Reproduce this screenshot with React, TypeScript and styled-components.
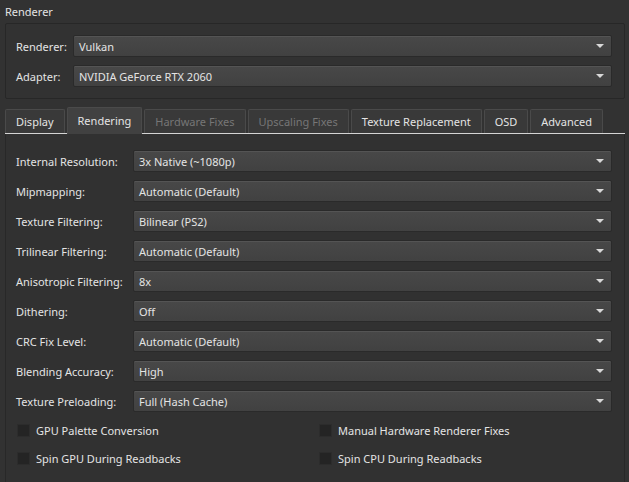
import React from 'react';
import styled, { createGlobalStyle } from 'styled-components';

const GlobalStyle = createGlobalStyle`
  html, body {
    margin: 0;
    padding: 0;
    background: #323232;
  }
  body {
    font-family: 'Noto Sans', 'Open Sans', sans-serif;
    font-size: 11px;
    color: #e4e4e4;
  }
`;

const Page = styled.div`
  width: 629px;
  height: 482px;
  overflow: hidden;
  background: #323232;
`;

const GroupTitle = styled.div`
  height: 23px;
  line-height: 24px;
  padding-left: 5px;
`;

const GroupBox = styled.div`
  margin: 0 4px 0 5px;
  border: 1px solid #272727;
  border-radius: 2px;
  padding: 11px 12px 11px 10px;
  display: grid;
  grid-template-columns: 57px 1fr;
  row-gap: 8px;
  align-items: center;
`;

const Label = styled.div`
  white-space: nowrap;
`;

const ComboBox = styled.div`
  height: 22px;
  box-sizing: border-box;
  border: 1px solid #2a2a2a;
  border-radius: 2px;
  background: linear-gradient(#484848, #414141);
  box-shadow: inset 0 1px 0 #545454;
  display: flex;
  align-items: center;
  padding: 0 7px 0 5px;
`;

const ComboText = styled.span`
  flex: 1;
  white-space: nowrap;
`;

const Arrow = styled.span`
  width: 0;
  height: 0;
  border-left: 4px solid transparent;
  border-right: 4px solid transparent;
  border-top: 4px solid #d8d8d8;
`;

const Tabs = styled.div`
  margin: 8px 4px 0 5px;
`;

const TabBar = styled.div`
  display: flex;
  align-items: flex-end;
  gap: 2px;
  height: 26px;
  border-bottom: 1px solid #d4d4d4;
`;

const Tab = styled.div<{ $active?: boolean; $disabled?: boolean }>`
  height: 24px;
  box-sizing: border-box;
  padding: 0 10px;
  display: flex;
  align-items: center;
  white-space: nowrap;
  border: 1px solid #4a4a4a;
  border-bottom: none;
  border-radius: 2px 2px 0 0;
  background: ${({ $active }) => ($active ? '#414141' : '#393939')};
  color: ${({ $disabled }) => ($disabled ? '#767676' : '#e4e4e4')};
  ${({ $active }) => $active && `height: 27px; margin-bottom: -1px; padding-bottom: 2px;`}
`;

const Pane = styled.div`
  border: 1px solid #282828;
  border-top: none;
  padding: 16px 12px 20px 10px;
  background: #313131;
  height: 400px;
`;

const FormGrid = styled.div`
  display: grid;
  grid-template-columns: 117px 1fr;
  row-gap: 8px;
  align-items: center;
`;

const CheckGrid = styled.div`
  display: grid;
  grid-template-columns: 302px 1fr;
  row-gap: 13px;
  margin-top: 11px;
  padding-left: 1px;
`;

const CheckRow = styled.label`
  display: flex;
  align-items: center;
  gap: 6px;
  white-space: nowrap;
`;

const CheckBox = styled.span`
  width: 13px;
  height: 13px;
  box-sizing: border-box;
  background: #242424;
  border: 1px solid #2c2c2c;
  border-radius: 1px;
`;

const Combo = ({ value }: { value: string }) => (
  <ComboBox>
    <ComboText>{value}</ComboText>
    <Arrow />
  </ComboBox>
);

const settings: [string, string][] = [
  ['Internal Resolution:', '3x Native (~1080p)'],
  ['Mipmapping:', 'Automatic (Default)'],
  ['Texture Filtering:', 'Bilinear (PS2)'],
  ['Trilinear Filtering:', 'Automatic (Default)'],
  ['Anisotropic Filtering:', '8x'],
  ['Dithering:', 'Off'],
  ['CRC Fix Level:', 'Automatic (Default)'],
  ['Blending Accuracy:', 'High'],
  ['Texture Preloading:', 'Full (Hash Cache)'],
];

const tabs = [
  { name: 'Display' },
  { name: 'Rendering', active: true },
  { name: 'Hardware Fixes', disabled: true },
  { name: 'Upscaling Fixes', disabled: true },
  { name: 'Texture Replacement' },
  { name: 'OSD' },
  { name: 'Advanced' },
];

const checks = [
  'GPU Palette Conversion',
  'Manual Hardware Renderer Fixes',
  'Spin GPU During Readbacks',
  'Spin CPU During Readbacks',
];

export default function App() {
  return (
    <>
      <GlobalStyle />
      <Page>
        <GroupTitle>Renderer</GroupTitle>
        <GroupBox>
          <Label>Renderer:</Label>
          <Combo value="Vulkan" />
          <Label>Adapter:</Label>
          <Combo value="NVIDIA GeForce RTX 2060" />
        </GroupBox>
        <Tabs>
          <TabBar>
            {tabs.map((t) => (
              <Tab key={t.name} $active={t.active} $disabled={t.disabled}>
                {t.name}
              </Tab>
            ))}
          </TabBar>
          <Pane>
            <FormGrid>
              {settings.map(([label, value]) => (
                <React.Fragment key={label}>
                  <Label>{label}</Label>
                  <Combo value={value} />
                </React.Fragment>
              ))}
            </FormGrid>
            <CheckGrid>
              {checks.map((c) => (
                <CheckRow key={c}>
                  <CheckBox />
                  {c}
                </CheckRow>
              ))}
            </CheckGrid>
          </Pane>
        </Tabs>
      </Page>
    </>
  );
}
